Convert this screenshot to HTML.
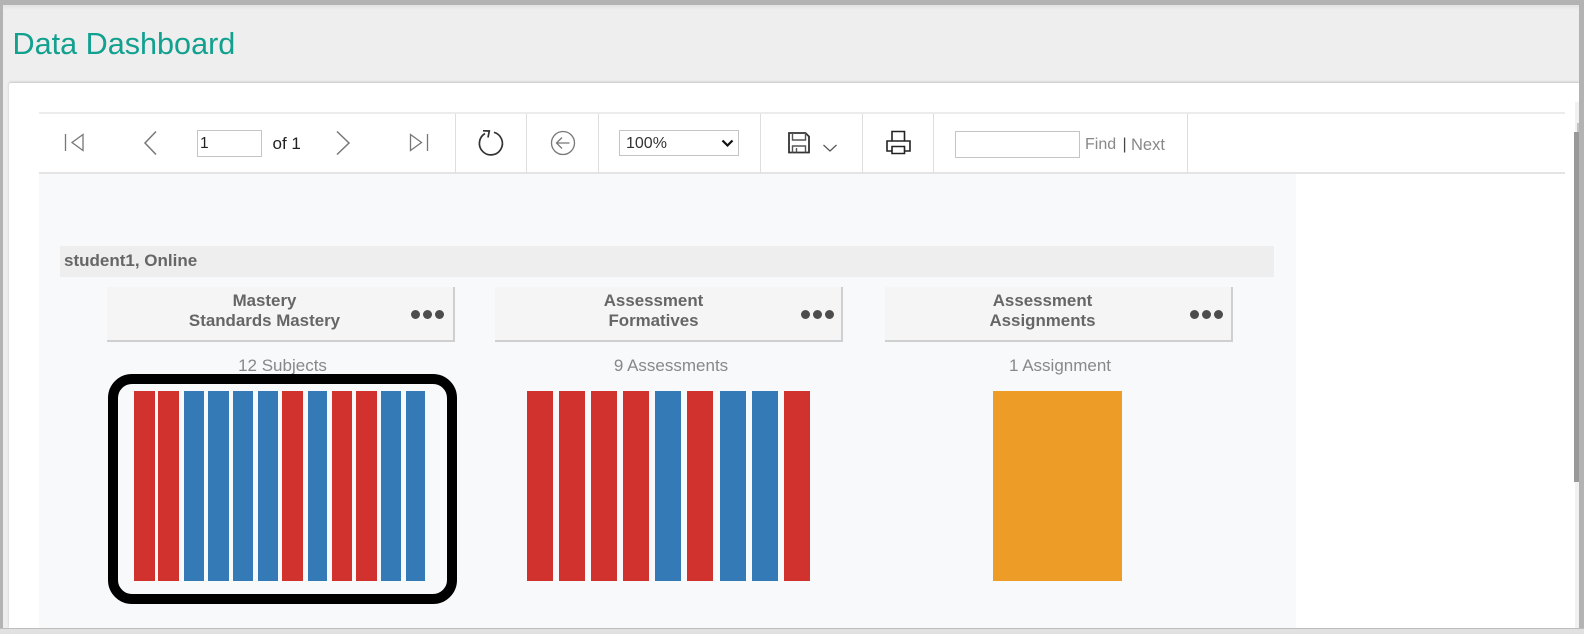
<!DOCTYPE html>
<html>
<head>
<meta charset="utf-8">
<style>
html,body{margin:0;padding:0;width:1584px;height:634px;overflow:hidden;background:#eeeeee;font-family:"Liberation Sans",sans-serif;}
.a{position:absolute;}
.t{position:absolute;white-space:nowrap;}
.card{position:absolute;top:287px;height:53px;background:#f5f5f5;border-right:2px solid #cfcfcf;border-bottom:2px solid #cfcfcf;}
.h{position:absolute;text-align:center;font-weight:bold;font-size:16.9px;line-height:20px;color:#666;white-space:nowrap;transform:translateX(-50%);top:291px;}
.c{position:absolute;text-align:center;font-size:17px;line-height:20px;color:#888;white-space:nowrap;transform:translateX(-50%);top:356px;}
.d{position:absolute;width:9px;height:9px;border-radius:50%;background:#4d4d4d;top:309.5px;}
.sep{position:absolute;top:114px;width:1px;height:59px;background:#dedede;}
.r,.b,.o{position:absolute;top:391px;height:190px;}
.r{background:#d2322d;}
.b{background:#337ab7;}
.o{background:#ed9c28;}
svg{position:absolute;overflow:visible;}
</style>
</head>
<body>
<!-- window frame -->
<div class="a" style="left:0;top:0;width:1584px;height:5px;background:#b2b3b2;"></div>
<div class="a" style="left:0;top:5px;width:3px;height:629px;background:#b2b3b2;"></div>
<div class="a" style="left:3px;top:5px;width:1576px;height:5px;background:linear-gradient(#e2e2e2,#eeeeee);"></div>

<div class="t" style="left:12.5px;top:27px;font-size:30.600px;line-height:34px;color:#12a08f;">Data Dashboard</div>

<!-- main card -->
<div class="a" style="left:9px;top:83px;width:1570px;height:545px;background:#fff;box-shadow:0 -1px 2px rgba(0,0,0,.18);border-radius:2px 0 0 0;"></div>

<!-- toolbar lines -->
<div class="a" style="left:39px;top:112px;width:1526px;height:2px;background:#ececec;"></div>
<div class="a" style="left:39px;top:172px;width:1526px;height:2px;background:#e4e4e4;"></div>
<div class="sep" style="left:455px;"></div>
<div class="sep" style="left:526px;"></div>
<div class="sep" style="left:598px;"></div>
<div class="sep" style="left:760px;"></div>
<div class="sep" style="left:862px;"></div>
<div class="sep" style="left:933px;"></div>
<div class="sep" style="left:1187px;"></div>

<!-- nav icons -->
<svg style="left:0;top:0;" width="1584" height="200" fill="none">
  <g stroke="#777" stroke-width="1.3">
    <path d="M65.500 134v17"/>
    <path d="M83 134.500v16l-11-8z"/>
    <path d="M156 131.500l-11 11.500 11 11.500" stroke-width="1.500"/>
    <path d="M337 131.500l12 11.500-12 11.500" stroke-width="1.500"/>
    <path d="M410.500 134.500v16l11-8z"/>
    <path d="M427.500 134v17"/>
  </g>
  <!-- refresh -->
  <path d="M494 132.300A11.500 11.500 0 1 1 485 133.500" stroke="#333" stroke-width="1.700"/>
  <path d="M483 130.800L489.300 131L488 137.500" stroke="#333" stroke-width="1.700"/>
  <!-- back -->
  <circle cx="563" cy="143" r="11.500" stroke="#777" stroke-width="1.300"/>
  <path d="M569.500 143h-13M562 137.500l-5.500 5.500 5.500 5.500" stroke="#777" stroke-width="1.300"/>
  <!-- save -->
  <path d="M789 133h16.500l3.500 3.500v16h-20z" stroke="#333" stroke-width="1.800"/>
  <path d="M792.500 133v7h13v-7M792.500 152.500v-6.500h13v6.500M796.500 148v4.500" stroke="#555" stroke-width="1.400"/>
  <!-- save chevron -->
  <path d="M823.500 145l6.500 6 6.500-6" stroke="#555" stroke-width="1.200"/>
  <!-- print -->
  <path d="M892 141v-9.500h12.500v9.500" stroke="#222" stroke-width="1.600"/>
  <path d="M892 151h-5v-10h23v10h-5.500" stroke="#222" stroke-width="1.600"/>
  <path d="M892 146.500h12.500v7h-12.500z" stroke="#222" stroke-width="1.600"/>
</svg>

<!-- page input -->
<div class="a" style="left:197px;top:130px;width:63px;height:25px;border:1px solid #c4c4c4;background:#fff;"></div>
<div class="t" style="left:200px;top:135px;font-size:15.500px;line-height:18px;color:#222;">1</div>
<div class="t" style="left:272.500px;top:135px;font-size:17px;line-height:18px;color:#222;">of 1</div>

<!-- zoom select -->
<div class="a" style="left:619px;top:130px;width:118px;height:24px;border:1px solid #c4c4c4;background:#fff;"></div>
<div class="t" style="left:626px;top:135px;font-size:16px;line-height:18px;color:#333;">100%</div>
<svg style="left:0;top:0;" width="1" height="1" fill="none"><path d="M722.500 140.500l5 5 5-5" stroke="#111" stroke-width="2.200"/></svg>

<!-- find -->
<div class="a" style="left:955px;top:131px;width:123px;height:25px;border:1px solid #c4c4c4;background:#fff;"></div>
<div class="t" style="left:1085px;top:136px;font-size:16px;line-height:18px;color:#888;">Find</div>
<div class="t" style="left:1122.500px;top:136px;font-size:16px;line-height:18px;color:#444;">|</div>
<div class="t" style="left:1131px;top:136px;font-size:16.500px;line-height:18px;color:#888;">Next</div>

<!-- report panel -->
<div class="a" style="left:39px;top:174px;width:1257px;height:454px;background:#f8f9fb;"></div>
<div class="a" style="left:60px;top:246px;width:1214px;height:31px;background:#eeeeee;"></div>
<div class="t" style="left:64px;top:252px;font-size:17px;line-height:18px;font-weight:bold;color:#666;">student1, Online</div>

<!-- tiles -->
<div class="card" style="left:107px;width:346px;"></div>
<div class="card" style="left:495px;width:346px;"></div>
<div class="card" style="left:885px;width:346px;"></div>

<div class="h" style="left:264.500px;">Mastery<br>Standards Mastery</div>
<div class="h" style="left:653.500px;">Assessment<br>Formatives</div>
<div class="h" style="left:1042.500px;">Assessment<br>Assignments</div>

<div class="d" style="left:411px;"></div><div class="d" style="left:423px;"></div><div class="d" style="left:435px;"></div>
<div class="d" style="left:800.500px;"></div><div class="d" style="left:812.500px;"></div><div class="d" style="left:824.500px;"></div>
<div class="d" style="left:1190px;"></div><div class="d" style="left:1202px;"></div><div class="d" style="left:1214px;"></div>

<div class="c" style="left:282.500px;">12 Subjects</div>
<div class="c" style="left:671px;">9 Assessments</div>
<div class="c" style="left:1060px;">1 Assignment</div>

<!-- black highlight frame -->
<div class="a" style="left:108px;top:374px;width:329px;height:210px;border:10px solid #000;border-radius:24px;"></div>

<!-- bars 1 -->
<div class="r" style="left:134px;width:21px;"></div>
<div class="r" style="left:158px;width:21px;"></div>
<div class="b" style="left:184px;width:20px;"></div>
<div class="b" style="left:208px;width:21px;"></div>
<div class="b" style="left:233px;width:20px;"></div>
<div class="b" style="left:258px;width:20px;"></div>
<div class="r" style="left:282px;width:21px;"></div>
<div class="b" style="left:308px;width:19px;"></div>
<div class="r" style="left:332px;width:20px;"></div>
<div class="r" style="left:356px;width:21px;"></div>
<div class="b" style="left:381px;width:20px;"></div>
<div class="b" style="left:406px;width:19px;"></div>

<!-- bars 2 -->
<div class="r" style="left:527px;width:26px;"></div>
<div class="r" style="left:559px;width:26px;"></div>
<div class="r" style="left:591px;width:26px;"></div>
<div class="r" style="left:623px;width:26px;"></div>
<div class="b" style="left:655px;width:26px;"></div>
<div class="r" style="left:687px;width:26px;"></div>
<div class="b" style="left:720px;width:26px;"></div>
<div class="b" style="left:752px;width:26px;"></div>
<div class="r" style="left:784px;width:26px;"></div>

<!-- bar 3 -->
<div class="o" style="left:993px;width:129px;"></div>

<!-- scrollbar + frame right/bottom -->
<div class="a" style="left:1575px;top:102px;width:4px;height:526px;background:#f1f1f1;"></div>
<div class="a" style="left:1577px;top:123px;width:2px;height:9px;background:#c4c4c4;"></div>
<div class="a" style="left:1574px;top:132px;width:5px;height:350px;background:#999;"></div>
<div class="a" style="left:1579px;top:0;width:5px;height:634px;background:#b2b3b2;"></div>
<div class="a" style="left:0;top:628px;width:1584px;height:1px;background:#bdbdbd;"></div>
<div class="a" style="left:0;top:629px;width:1584px;height:5px;background:#e0e1e0;"></div>
</body>
</html>
